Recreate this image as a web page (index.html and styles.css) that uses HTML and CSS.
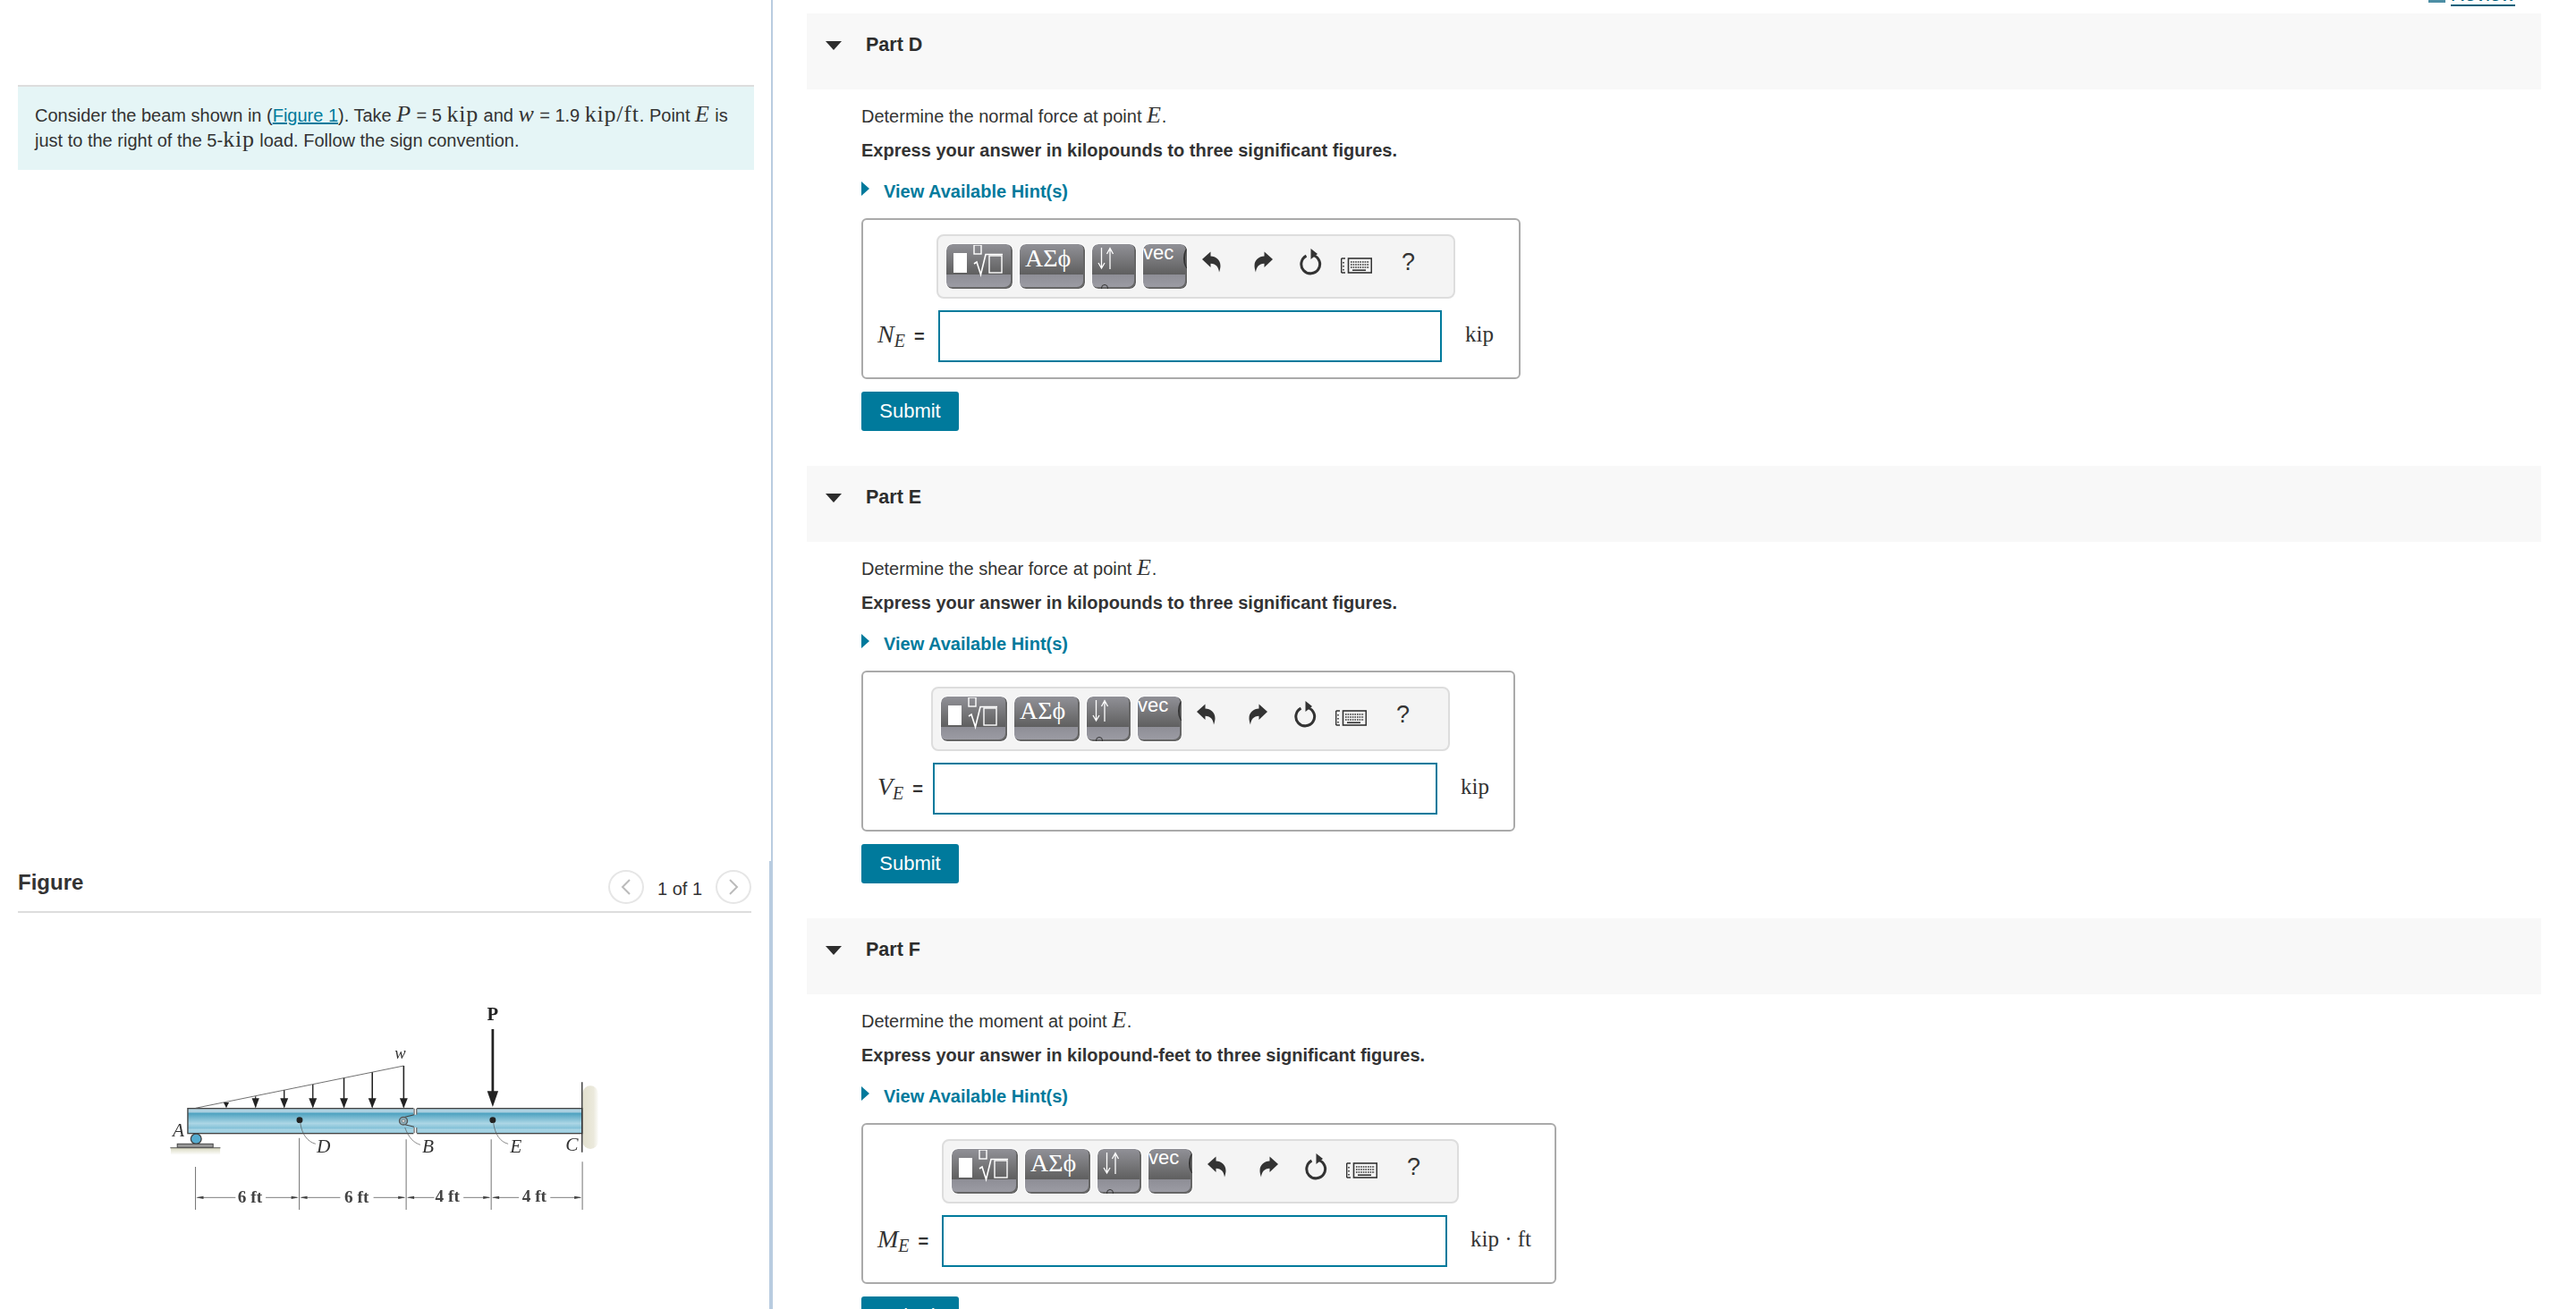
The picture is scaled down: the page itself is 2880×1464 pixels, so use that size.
FILE: index.html
```html
<!DOCTYPE html>
<html lang="en">
<head>
<meta charset="utf-8">
<title>Beam problem</title>
<link rel="stylesheet" href="styles.css">
</head>
<body>
<svg class="defs" width="0" height="0" aria-hidden="true">
  <defs>
    <symbol id="i-undo" viewBox="0 0 24 24"><path d="M1 9 10.500 .5V5.500C18 6 24.500 11.500 20 23.500 19.500 18 16.500 14 10.500 13.800V18Z"/></symbol>
    <symbol id="i-reset" viewBox="0 0 26 30"><path d="M7.500 8.200A10.400 10.400 0 1 0 15.500 7.600" fill="none" stroke="currentColor" stroke-width="3"/><path d="M12.500 0V12L20 6Z"/></symbol>
    <symbol id="i-kbd" viewBox="0 0 35 18">
      <path d="M.7 1H5M.7 17H5M.7 1V17" fill="none" stroke="currentColor" stroke-width="1.400"/>
      <rect x="8.500" y="1" width="25.800" height="16" fill="none" stroke="currentColor" stroke-width="1.600"/>
      <path d="M11 5H32M11 8H32M11 11H32" fill="none" stroke="currentColor" stroke-width="1.600" stroke-dasharray="1.600 1"/>
      <path d="M3 5V6.500M3 9V10.500M3 13V14.500" stroke="currentColor" stroke-width="1.600"/>
      <path d="M13 14.200H28" stroke="currentColor" stroke-width="1.600"/>
    </symbol>
    <symbol id="i-tpl" viewBox="0 0 62 38">
      <rect x="1" y="9" width="15" height="22" fill="#fff"/>
      <rect x="24" y="0" width="8" height="10" fill="none" stroke="#fff" stroke-width="1.400"/>
      <path d="M24 21 27 19 31.500 33 37 10.500H56" fill="none" stroke="#fff" stroke-width="1.600"/>
      <rect x="41" y="12" width="14" height="19" fill="none" stroke="#fff" stroke-width="1.400"/>
    </symbol>
    <symbol id="i-arrows" viewBox="0 0 28 26">
      <path d="M6.500 1V23M3 18 6.500 24 10 18M16 25V2M12.500 8 16 1.500 19.500 8" fill="none" stroke="#fff" stroke-width="1.300"/>
    </symbol>
  </defs>
</svg>

<div class="page">
  <aside class="left">
    <section class="intro">
      <p>Consider the beam shown in (<a href="#" class="link">Figure 1</a>). Take <span class="m"><i>P</i></span> = 5 <span class="m">kip</span> and <span class="m"><i>w</i></span> = 1.9 <span class="m">kip/ft</span>. Point <span class="m"><i>E</i></span> is just to the right of the 5-<span class="m">kip</span> load. Follow the sign convention.</p>
    </section>

    <header class="fig-head">
      <h2 class="fig-title">Figure</h2>
      <div class="pager">
        <span class="pager-btn"><svg width="12" height="20" viewBox="0 0 12 20"><path d="M10 2 2 10 10 18" fill="none" stroke="#bbb" stroke-width="2"/></svg></span>
        <span class="pager-text">1 of 1</span>
        <span class="pager-btn"><svg width="12" height="20" viewBox="0 0 12 20"><path d="M2 2 10 10 2 18" fill="none" stroke="#bbb" stroke-width="2"/></svg></span>
      </div>
    </header>

    <svg class="beam" viewBox="0 0 1568 840" preserveAspectRatio="none" role="img" aria-label="Beam diagram">
      <defs>
        <linearGradient id="beamfill" x1="0" y1="0" x2="0" y2="1">
          <stop offset="0" stop-color="#b4d6e4"/><stop offset=".14" stop-color="#a9cfe0"/>
          <stop offset=".2" stop-color="#4fa3c1"/><stop offset=".6" stop-color="#acd6e5"/>
          <stop offset=".8" stop-color="#82c0d7"/><stop offset=".83" stop-color="#acd6e5"/>
          <stop offset="1" stop-color="#95c9dc"/>
        </linearGradient>
        <linearGradient id="ground" x1="0" y1="0" x2="0" y2="1">
          <stop offset="0" stop-color="#d8d8bf"/><stop offset="1" stop-color="#fff"/>
        </linearGradient>
        <linearGradient id="wall" x1="0" y1="0" x2="1" y2="0">
          <stop offset="0" stop-color="#e2e0ce"/><stop offset=".7" stop-color="#ebe9dc"/><stop offset="1" stop-color="#fbfbf8"/>
        </linearGradient>
      </defs>
      <rect x="1427" y="340" width="50" height="212" rx="25" fill="url(#wall)"/>
      <rect x="90" y="548" width="160" height="24" fill="url(#ground)"/>
      <rect x="145" y="416" width="1280" height="84" fill="url(#beamfill)" stroke="#444" stroke-width="4"/>
      <rect x="878" y="410" width="11" height="27" fill="#fff"/>
      <rect x="878" y="480" width="11" height="24" fill="#fff"/>
      <path d="M880 416V437M888 416V437M880 480V499M888 480V499M880 437 850 445M880 478 850 470" fill="none" stroke="#444" stroke-width="3"/>
      <circle cx="845" cy="458" r="13" fill="#8db0bd" stroke="#555" stroke-width="4"/>
      <circle cx="845" cy="458" r="5" fill="#ddd" stroke="#666" stroke-width="2"/>
      <circle cx="172" cy="518" r="17" fill="#55acd0" stroke="#444" stroke-width="4"/>
      <rect x="111" y="535" width="116" height="12" fill="#999" stroke="#444" stroke-width="3"/>
      <path d="M88 548H251" stroke="#555" stroke-width="3"/>
      <path d="M1425 328V563" stroke="#333" stroke-width="4"/>
      <path d="M170 415 846 273" fill="none" stroke="#555" stroke-width="2.500"/>
      <g stroke="#222" fill="#222">
        <path d="M270 396V412" stroke-width="2.500"/><path d="M261 396H279L270 414Z" stroke="none"/>
        <path d="M365 376V412" stroke-width="3.500"/><path d="M353 382H377L365 415Z" stroke="none"/>
        <path d="M458 355V412" stroke-width="4"/><path d="M445 382H471L458 415Z" stroke="none"/>
        <path d="M551 336V412" stroke-width="4"/><path d="M538 382H564L551 415Z" stroke="none"/>
        <path d="M652 314V412" stroke-width="4.500"/><path d="M639 382H665L652 415Z" stroke="none"/>
        <path d="M744 295V412" stroke-width="4.500"/><path d="M731 382H757L744 415Z" stroke="none"/>
        <path d="M846 273V412" stroke-width="4.500"/><path d="M833 382H859L846 415Z" stroke="none"/>
        <path d="M1135 150V365" stroke-width="8"/><path d="M1117 358H1153L1135 411Z" stroke="none"/>
        <circle cx="508" cy="455" r="10" stroke="none"/><circle cx="1135" cy="455" r="10" stroke="none"/>
      </g>
      <path d="M510 462C515 505 535 528 560 535M850 480C862 515 880 532 900 538M1137 462C1142 505 1160 528 1185 535" fill="none" stroke="#555" stroke-width="2"/>
      <path d="M170 612V756M507 515V756M854 520V756M1130 520V756M1426 595V756" stroke="#777" stroke-width="3" fill="none"/>
      <path d="M176 715H300M398 715H500M514 715H640M748 715H848M860 715H945M1040 715H1124M1136 715H1220M1322 715H1420" stroke="#666" stroke-width="2.500" fill="none"/>
      <g fill="#444">
        <path d="M172 715 196 710V720ZM505 715 481 710V720ZM509 715 533 710V720ZM852 715 828 710V720ZM856 715 880 710V720ZM1128 715 1104 710V720ZM1132 715 1156 710V720ZM1424 715 1400 710V720Z"/>
      </g>
      <g class="b-text">
        <text x="347" y="732" text-anchor="middle">6 ft</text>
        <text x="693" y="732" text-anchor="middle">6 ft</text>
        <text x="988" y="728" text-anchor="middle">4 ft</text>
        <text x="1270" y="728" text-anchor="middle">4 ft</text>
      </g>
      <g class="b-label">
        <text x="115" y="510" text-anchor="middle">A</text>
        <text x="586" y="565" text-anchor="middle">D</text>
        <text x="925" y="565" text-anchor="middle">B</text>
        <text x="1210" y="565" text-anchor="middle">E</text>
        <text x="1392" y="558" text-anchor="middle">C</text>
        <text class="b-w" x="835" y="248" text-anchor="middle">w</text>
      </g>
      <text class="b-p" x="1135" y="120" text-anchor="middle">P</text>
    </svg>
  </aside>

  <div class="divider"></div>

  <main class="right">
    <div class="review-row">
      <span class="review-book"></span>
      <a href="#" class="review">Review</a>
    </div>

    <section class="part part-d">
      <header class="part-head"><span class="caret"></span><h3>Part D</h3></header>
      <p class="q">Determine the normal force at point <span class="m"><i>E</i></span>.</p>
      <p class="req">Express your answer in kilopounds to three significant figures.</p>
      <a href="#" class="hint"><span class="hint-caret"></span>View Available Hint(s)</a>
      <div class="answer">
        <div class="toolbar">
          <span class="tb tb-a"><svg class="tpl" width="62" height="38"><use href="#i-tpl"/></svg></span>
          <span class="tb tb-b">ΑΣϕ</span>
          <span class="tb tb-c"><svg class="arw" width="28" height="26"><use href="#i-arrows"/></svg><span class="tb-dot"></span></span>
          <span class="tb tb-d"><span class="vec">vec</span><span class="paren"></span></span>
          <svg class="ic ic-undo" width="24" height="24"><use href="#i-undo"/></svg>
          <svg class="ic ic-redo" width="24" height="24"><use href="#i-undo"/></svg>
          <svg class="ic ic-reset" width="26" height="30"><use href="#i-reset"/></svg>
          <svg class="ic ic-kbd" width="35" height="18"><use href="#i-kbd"/></svg>
          <span class="ic-help">?</span>
        </div>
        <label class="lbl"><span class="m"><i>N</i><sub><i>E</i></sub></span><span class="eq">=</span></label>
        <input class="field" type="text">
        <span class="unit m">kip</span>
      </div>
      <button class="submit" type="button">Submit</button>
    </section>

    <section class="part part-e">
      <header class="part-head"><span class="caret"></span><h3>Part E</h3></header>
      <p class="q">Determine the shear force at point <span class="m"><i>E</i></span>.</p>
      <p class="req">Express your answer in kilopounds to three significant figures.</p>
      <a href="#" class="hint"><span class="hint-caret"></span>View Available Hint(s)</a>
      <div class="answer">
        <div class="toolbar">
          <span class="tb tb-a"><svg class="tpl" width="62" height="38"><use href="#i-tpl"/></svg></span>
          <span class="tb tb-b">ΑΣϕ</span>
          <span class="tb tb-c"><svg class="arw" width="28" height="26"><use href="#i-arrows"/></svg><span class="tb-dot"></span></span>
          <span class="tb tb-d"><span class="vec">vec</span><span class="paren"></span></span>
          <svg class="ic ic-undo" width="24" height="24"><use href="#i-undo"/></svg>
          <svg class="ic ic-redo" width="24" height="24"><use href="#i-undo"/></svg>
          <svg class="ic ic-reset" width="26" height="30"><use href="#i-reset"/></svg>
          <svg class="ic ic-kbd" width="35" height="18"><use href="#i-kbd"/></svg>
          <span class="ic-help">?</span>
        </div>
        <label class="lbl"><span class="m"><i>V</i><sub><i>E</i></sub></span><span class="eq">=</span></label>
        <input class="field" type="text">
        <span class="unit m">kip</span>
      </div>
      <button class="submit" type="button">Submit</button>
    </section>

    <section class="part part-f">
      <header class="part-head"><span class="caret"></span><h3>Part F</h3></header>
      <p class="q">Determine the moment at point <span class="m"><i>E</i></span>.</p>
      <p class="req">Express your answer in kilopound-feet to three significant figures.</p>
      <a href="#" class="hint"><span class="hint-caret"></span>View Available Hint(s)</a>
      <div class="answer">
        <div class="toolbar">
          <span class="tb tb-a"><svg class="tpl" width="62" height="38"><use href="#i-tpl"/></svg></span>
          <span class="tb tb-b">ΑΣϕ</span>
          <span class="tb tb-c"><svg class="arw" width="28" height="26"><use href="#i-arrows"/></svg><span class="tb-dot"></span></span>
          <span class="tb tb-d"><span class="vec">vec</span><span class="paren"></span></span>
          <svg class="ic ic-undo" width="24" height="24"><use href="#i-undo"/></svg>
          <svg class="ic ic-redo" width="24" height="24"><use href="#i-undo"/></svg>
          <svg class="ic ic-reset" width="26" height="30"><use href="#i-reset"/></svg>
          <svg class="ic ic-kbd" width="35" height="18"><use href="#i-kbd"/></svg>
          <span class="ic-help">?</span>
        </div>
        <label class="lbl"><span class="m"><i>M</i><sub><i>E</i></sub></span><span class="eq">=</span></label>
        <input class="field" type="text">
        <span class="unit m">kip · ft</span>
      </div>
      <button class="submit" type="button">Submit</button>
    </section>
  </main>
</div>
</body>
</html>
```

FILE: styles.css
```css
* { box-sizing: border-box; }
html, body { margin: 0; height: 1464px; overflow: hidden; background: #fff; }
body { font-family: "Liberation Sans", Arial, sans-serif; font-size: 20px; color: #333; }
.defs { position: absolute; }
p { margin: 0; }
a { color: #007a9c; }

.page { display: grid; grid-template-columns: 860px 4px 1fr; height: 1464px; overflow: hidden; }

/* Left column */
.left { padding-left: 20px; padding-right: 17px; display: flex; flex-direction: column; align-items: stretch; }
.intro { margin-top: 95px; height: 95px; background: #e5f5f6; border-top: 2px solid #ddd; padding: 18px 8px 0 19px; line-height: 28px; font-size: 20px; }
.m { font-family: "Liberation Serif", "Times New Roman", serif; font-size: 1.300em; line-height: 0; letter-spacing: .03em; }
.link { color: #007a9c; text-decoration: underline; }
.fig-head { margin-top: 783px; margin-right: 3px; height: 48px; border-bottom: 2px solid #ddd; display: flex; justify-content: space-between; align-items: flex-start; }
.fig-title { margin: 0; font-size: 24px; font-weight: 700; color: #333; line-height: 28px; }
.pager { display: flex; align-items: center; margin-left: auto; }
.pager-btn { width: 40px; height: 38px; border: 2px solid #e6e6e6; border-radius: 50%; display: flex; align-items: center; justify-content: center; }
.pager-text { width: 80px; text-align: center; font-size: 20px; padding-top: 4px; }
.beam { width: 540px; height: 280px; margin-top: 80px; margin-left: 140px; filter: blur(.6px); flex: none; }
.b-text text { font-family: "Liberation Serif", serif; font-size: 56px; font-weight: 700; fill: #444; }
.b-label text { font-family: "Liberation Serif", serif; font-size: 62px; font-style: italic; fill: #333; }
.b-label .b-w { font-size: 54px; }
.b-p { font-family: "Liberation Serif", serif; font-size: 60px; font-weight: 700; fill: #222; }

/* Divider: 2px above the figure heading, 4px below it */
.divider {
  background:
    linear-gradient(#b9cce0, #b9cce0) right top / 2px 100% no-repeat,
    linear-gradient(#b9cce0, #b9cce0) left 963px / 100% 100% no-repeat;
}

/* Right column */
.right { padding: 0 39px 0 38px; min-width: 0; }
.review-row { height: 15px; overflow: hidden; display: flex; justify-content: flex-end; align-items: flex-start; padding-right: 29px; }
.review-book { width: 19px; height: 3px; background: #4d8ea5; margin-right: 6px; }
.review { display: block; color: #005f7a; font-size: 22px; line-height: 24px; margin-top: -18px; height: 25px; border-bottom: 2px solid #005f7a; text-decoration: none; flex: none; }

.part { margin-bottom: 39px; }
.part-head { height: 85px; background: #f8f8f8; display: flex; align-items: flex-start; padding: 22px 0 0 21px; }
.caret { width: 0; height: 0; border-left: 9px solid transparent; border-right: 9px solid transparent; border-top: 10px solid #2d2d2d; margin-top: 9px; margin-right: 27px; }
.part-head h3 { margin: 0; font-size: 21.500px; font-weight: 700; line-height: 26px; color: #2d2d2d; }
.q, .req, .hint { margin-left: 61px; line-height: 28px; font-size: 20px; display: block; }
.q { margin-top: 16px; }
.req { margin-top: 10px; font-weight: 700; }
.hint { margin-top: 18px; font-weight: 700; color: #007a9c; text-decoration: none; display: flex; align-items: center; }
.hint-caret { width: 0; height: 0; border-top: 8px solid transparent; border-bottom: 8px solid transparent; border-left: 9px solid #007a9c; margin-right: 16px; margin-top: -6px; }

.answer { margin: 16px 0 0 61px; height: 180px; border: 2px solid #aaa; border-radius: 6px; padding: 16px 0 0; display: grid; grid-template-rows: 72px 58px; row-gap: 13px; align-items: center; }
.part-d .answer { width: 737px; grid-template-columns: 84px 563px auto; }
.part-e .answer { width: 731px; grid-template-columns: 78px 564px auto; }
.part-f .answer { width: 777px; grid-template-columns: 88px 565px auto; }

.toolbar { grid-column: 2 / 4; width: 580px; height: 72px; margin-left: -2px; background: #f4f4f4; border: 2px solid #ddd; border-radius: 8px; padding: 9px 0 0 9px; display: flex; align-items: flex-start; }
.part-f .toolbar { margin-left: 0; width: 578px; }
.tb { position: relative; display: block; height: 50px; margin-right: 8px; overflow: hidden; border-radius: 7px; flex: none; color: #fff;
  background: linear-gradient(#919197, #5f5f5f 68%, #8e8e96 68%, #9d9da5 100%);
  box-shadow: inset -2px -2px 0 #666;
  outline: 1px solid #fff; }
.tb-a { width: 74px; }
.tb-b { width: 73px; font-family: "Liberation Serif", serif; font-size: 28px; line-height: 32px; padding-left: 6px; }
.tb-c { width: 49px; }
.tb-d { width: 49px; }
.tpl { display: block; margin: 1px 0 0 7px; }
.arw { display: block; margin: 3px 0 0 4px; }
.tb-dot { position: absolute; left: 10px; bottom: -3px; width: 8px; height: 8px; border: 1.500px solid #333; border-radius: 50%; }
.vec { position: absolute; left: 0; top: -5px; font-family: "Liberation Sans", sans-serif; font-size: 22px; line-height: 30px; }
.paren { position: absolute; right: -8px; top: 4px; width: 12px; height: 24px; border-left: 2px solid #333; border-radius: 50%; }

.ic { color: #333; fill: #333; flex: none; }
.ic-undo { margin: 8px 0 0 8px; }
.ic-redo { margin: 8px 0 0 33px; transform: scaleX(-1); }
.ic-reset { margin: 5px 0 0 29px; }
.ic-kbd { margin: 15px 0 0 20px; }
.ic-help { margin: 3px 0 0 33px; font-size: 27px; line-height: 34px; color: #333; flex: none; }

.lbl { padding-left: 16px; white-space: nowrap; }
.lbl .m { font-size: 28px; letter-spacing: 0; }
.lbl sub { font-size: 20px; line-height: 0; vertical-align: -5px; }
.eq { font-size: 20px; font-weight: 700; margin-left: 10px; }
.field { width: 100%; height: 58px; border: 2px solid #007a9c; background: #fff; outline: none; padding: 0 8px; }
.unit { margin: -5px 0 0 26px; font-size: 25px; white-space: nowrap; letter-spacing: 0; line-height: 28px; }
.submit { display: block; margin: 14px 0 0 61px; width: 109px; height: 44px; border: 0; border-radius: 3px; background: #007a9c; color: #fff; font-family: "Liberation Sans", sans-serif; font-size: 22px; padding: 0; }
```
